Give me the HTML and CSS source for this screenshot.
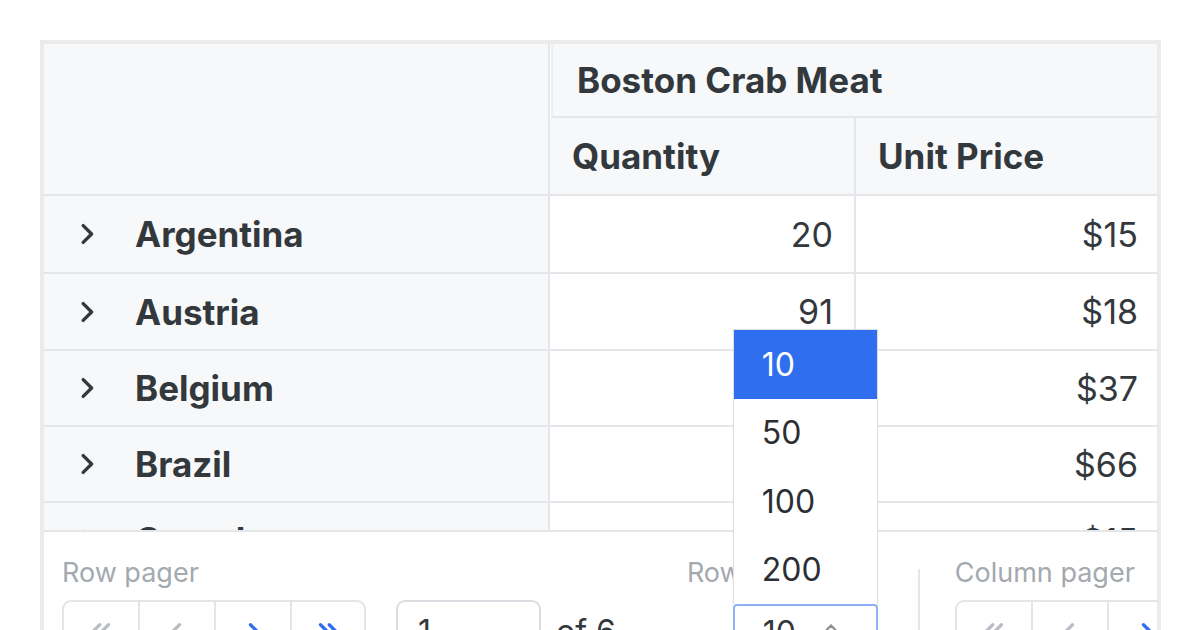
FILE: index.html
```html
<!DOCTYPE html>
<html>
<head>
<meta charset="utf-8">
<link rel="stylesheet" href="styles.css">
</head>
<body>
<div class="frame">
  <div class="grid">
    <div class="cell corner"></div>
    <div class="cell group">Boston Crab Meat</div>
    <div class="cell colhead">Quantity</div>
    <div class="cell colhead last">Unit Price</div>

    <div class="cell rowhead"><svg class="chev" viewBox="0 0 16 20"><path d="M4 3l7 7-7 7"/></svg><span>Argentina</span></div>
    <div class="cell num">20</div>
    <div class="cell num last">$15</div>

    <div class="cell rowhead"><svg class="chev" viewBox="0 0 16 20"><path d="M4 3l7 7-7 7"/></svg><span>Austria</span></div>
    <div class="cell num">91</div>
    <div class="cell num last">$18</div>

    <div class="cell rowhead"><svg class="chev" viewBox="0 0 16 20"><path d="M4 3l7 7-7 7"/></svg><span>Belgium</span></div>
    <div class="cell num">42</div>
    <div class="cell num last">$37</div>

    <div class="cell rowhead"><svg class="chev" viewBox="0 0 16 20"><path d="M4 3l7 7-7 7"/></svg><span>Brazil</span></div>
    <div class="cell num">57</div>
    <div class="cell num last">$66</div>

    <div class="cell rowhead"><svg class="chev" viewBox="0 0 16 20"><path d="M4 3l7 7-7 7"/></svg><span>Canada</span></div>
    <div class="cell num">33</div>
    <div class="cell num last">$15</div>
  </div>

  <div class="pager">
    <div class="pgroup">
      <div class="plabel">Row pager</div>
      <div class="pcontrols">
        <div class="btns">
          <div class="btn off"><svg viewBox="0 0 24 24"><path d="M11 7l-5 5 5 5M18 7l-5 5 5 5"/></svg></div>
          <div class="btn off"><svg viewBox="0 0 24 24"><path d="M14 7l-5 5 5 5"/></svg></div>
          <div class="btn on"><svg viewBox="0 0 24 24"><path d="M10 7l5 5-5 5"/></svg></div>
          <div class="btn on"><svg viewBox="0 0 24 24"><path d="M6 7l5 5-5 5M13 7l5 5-5 5"/></svg></div>
        </div>
        <div class="pageinput">1</div>
        <div class="of">of 6</div>
      </div>
    </div>

    <div class="pgroup right">
      <div class="plabel">Rows per page</div>
      <div class="selwrap">
        <div class="select"><span>10</span><svg class="updown" viewBox="0 0 24 24"><path d="M8 10l4-4 4 4M8 14l4 4 4-4"/></svg></div>
        <div class="list">
          <div class="opt sel">10</div>
          <div class="opt">50</div>
          <div class="opt">100</div>
          <div class="opt">200</div>
        </div>
      </div>
    </div>

    <div class="divider"></div>

    <div class="pgroup">
      <div class="plabel">Column pager</div>
      <div class="pcontrols">
        <div class="btns">
          <div class="btn off"><svg viewBox="0 0 24 24"><path d="M11 7l-5 5 5 5M18 7l-5 5 5 5"/></svg></div>
          <div class="btn off"><svg viewBox="0 0 24 24"><path d="M14 7l-5 5 5 5"/></svg></div>
          <div class="btn on"><svg viewBox="0 0 24 24"><path d="M10 7l5 5-5 5"/></svg></div>
          <div class="btn on"><svg viewBox="0 0 24 24"><path d="M6 7l5 5-5 5M13 7l5 5-5 5"/></svg></div>
        </div>
      </div>
    </div>
  </div>
</div>
</body>
</html>
```

FILE: styles.css
```css
* { box-sizing: border-box; }
html, body { margin: 0; padding: 0; background: #ffffff; }
body {
  font-family: Inter, "Noto Sans", "Liberation Sans", sans-serif;
  color: #33383d;
  height: 630px;
  overflow: hidden;
}
.frame {
  margin: 40px 0 0 40px;
  width: 1121px;
  height: 640px;
  border: 4px solid #ebebeb;
  border-bottom: none;
  background: #fff;
}
.grid {
  display: grid;
  grid-template-columns: 506px 306px 1fr;
  grid-template-rows: 74px 78px 78px 77px 76px 76px 76px;
  height: 486px;
  overflow: hidden;
}
.cell {
  border-right: 2px solid #e4e6ea;
  border-bottom: 2px solid #e4e6ea;
  display: flex;
  align-items: center;
  font-size: 35px;
}
.cell.last { border-right: none; }
.corner {
  grid-row: span 2;
  background: #f7f8fa;
}
.group {
  grid-column: span 2;
  border-right: none;
  background: #f7f8fa;
  font-weight: 700;
  padding-left: 26px;
  box-shadow: inset 2px 0 0 #eceef1;
  margin-left: 1px;
}
.colhead {
  background: #f7f8fa;
  font-weight: 700;
  padding-left: 22px;
}
.rowhead {
  background: #f7f8fa;
  font-weight: 700;
  padding-left: 34px;
}
.chev {
  width: 20px;
  height: 24px;
  margin-right: 37px;
  fill: none;
  stroke: #33383d;
  stroke-width: 2.8;
  stroke-linecap: round;
  stroke-linejoin: round;
}
.num {
  justify-content: flex-end;
  padding-right: 21px;
  background: #fff;
  font-weight: 400;
  font-size: 34px;
}
.num.last { padding-right: 19px; }

.pager {
  border-top: 2px solid #e4e6ea;
  display: flex;
  align-items: flex-start;
  padding: 23px 0 0 18px;
  overflow-x: clip;
  overflow-y: visible;
  width: 1113px;
}
.pgroup {
  display: flex;
  flex-direction: column;
  gap: 10px;
  flex: none;
}
.pgroup.right {
  align-items: flex-end;
  margin-left: 71px;
}
.plabel {
  font-size: 27px;
  line-height: 35px;
  color: #a4a9af;
  white-space: nowrap;
}
.pcontrols {
  display: flex;
  align-items: center;
  gap: 0;
}
.btns {
  display: flex;
  border: 2px solid #e3e5e9;
  border-radius: 9px;
  height: 62px;
  flex: none;
}
.btn {
  width: 76px;
  display: flex;
  align-items: center;
  justify-content: center;
  border-right: 2px solid #e3e5e9;
}
.btn:last-child { border-right: none; width: 72px; }
.btn svg {
  width: 30px;
  height: 30px;
  fill: none;
  stroke-width: 2.6;
  stroke-linecap: round;
  stroke-linejoin: round;
}
.btn.off svg { stroke: #b9bdc3; }
.btn.on svg { stroke: #2f6fef; }
.pageinput {
  margin-left: 30px;
  width: 145px;
  height: 62px;
  border: 2px solid #dadde1;
  border-radius: 9px;
  font-size: 32px;
  padding-left: 20px;
  display: flex;
  align-items: center;
}
.of {
  margin-left: 15px;
  font-size: 32px;
  color: #33383d;
  white-space: nowrap;
}
.selwrap {
  position: relative;
  margin-top: 4px;
}
.select {
  width: 145px;
  height: 56px;
  border: 2px solid #8fb3f7;
  border-radius: 4px;
  display: flex;
  align-items: center;
  padding-left: 28px;
  font-size: 32px;
  gap: 22px;
}
.updown {
  width: 26px;
  height: 26px;
  fill: none;
  stroke: #8a8f95;
  stroke-width: 2;
  stroke-linecap: round;
}
.list {
  position: absolute;
  left: 0;
  bottom: 100%;
  width: 145px;
  background: #fff;
  border: 1px solid #dcdfe3;
  border-bottom: none;
  box-shadow: 0 0 2px rgba(0,0,0,0.05);
  z-index: 5;
}
.opt {
  height: 68.5px;
  display: flex;
  align-items: center;
  padding-left: 28px;
  font-size: 32px;
  color: #2b2f33;
}
.opt.sel {
  background: #2f6fef;
  color: #fff;
}
.divider {
  width: 2px;
  height: 80px;
  background: #e4e6ea;
  margin-left: 40px;
  margin-top: 14px;
  flex: none;
}
.divider + .pgroup { margin-left: 35px; }
```
